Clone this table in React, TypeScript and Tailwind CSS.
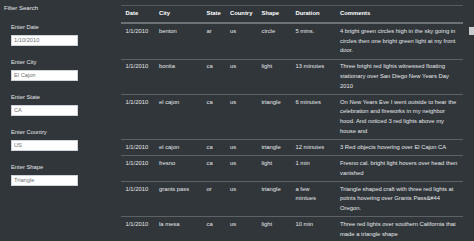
import type { ReactNode } from "react";

const filters = [
  { label: "Enter Date", value: "1/10/2010" },
  { label: "Enter City", value: "El Cajon" },
  { label: "Enter State", value: "CA" },
  { label: "Enter Country", value: "US" },
  { label: "Enter Shape", value: "Triangle" },
];

const rows: ReactNode[][] = [
  ["1/1/2010", "benton", "ar", "us", "circle", "5 mins.", "4 bright green circles high in the sky going in circles then one bright green light at my front door."],
  ["1/1/2010", "bonita", "ca", "us", "light", "13 minutes", "Three bright red lights witnessed floating stationary over San Diego New Years Day 2010"],
  ["1/1/2010", "el cajon", "ca", "us", "triangle", "6 minutes", "On New Years Eve I went outside to hear the celebration and fireworks in my neighbor hood. And noticed 3 red lights above my house and"],
  ["1/1/2010", "el cajon", "ca", "us", "triangle", "12 minutes", "3 Red objects hovering over El Cajon CA"],
  [
    "1/1/2010",
    "fresno",
    "ca",
    "us",
    "light",
    "1 min",
    <>
      <span className="whitespace-nowrap">Fresno cal. bright light hovers over head then</span> vanished
    </>,
  ],
  ["1/1/2010", "grants pass", "or", "us", "triangle", "a few mintues", "Triangle shaped craft with three red lights at points hovering over Grants Pass&#44 Oregon."],
  ["1/1/2010", "la mesa", "ca", "us", "light", "10 min", "Three red lights over southern California that made a triangle shape"],
];

const headers = ["Date", "City", "State", "Country", "Shape", "Duration", "Comments"];
const widths = ["w-[33.5px]", "w-[47.5px]", "w-[23.5px]", "w-[31.5px]", "w-[34px]", "w-[44.5px]", "w-[127.5px]"];
const pads = ["pr-[4px]", "pr-[4px]", "pr-[4px]", "pr-[4px]", "pr-[4px]", "pr-[7px]", "pr-[2px]"];

export default function App() {
  return (
    <div className="relative flex h-[241px] w-[474px] overflow-hidden bg-[#31363b] font-['Liberation_Sans',Arial,sans-serif] text-[5.85px] leading-[9.75px] text-[#e6e8ea]">
      <aside className="w-[121px] shrink-0 pt-[3.5px]">
        <div className="pl-[4px] text-[6px] leading-[9px]">Filter Search</div>
        <div className="mt-[10px] flex flex-col gap-[12px] pl-[11px]">
          {filters.map((f) => (
            <div key={f.label} className="flex flex-col">
              <label className="text-[5.8px] leading-[9px]">{f.label}</label>
              <input
                readOnly
                value={f.value}
                className="mt-[3.5px] h-[10.5px] w-[66.5px] border border-[#ced4da] bg-white px-[2px] text-[5.7px] leading-[9px] text-[#6c6f73] outline-none"
              />
            </div>
          ))}
        </div>
      </aside>
      <main className="mt-[4.5px] w-[342px] shrink-0">
        <table className="w-full table-fixed border-collapse">
          <colgroup>
            {widths.map((w, i) => (
              <col key={i} className={w} />
            ))}
          </colgroup>
          <thead>
            <tr className="border-t border-b-2 border-t-[#565b61] border-b-[#6d7278]">
              {headers.map((h) => (
                <th key={h} className="px-[4.5px] py-[3.5px] text-left align-top font-bold text-white">
                  {h}
                </th>
              ))}
            </tr>
          </thead>
          <tbody>
            {rows.map((r, i) => (
              <tr key={i} className="border-b border-[#5d6267]">
                {r.map((c, j) => (
                  <td key={j} className={`py-[2.6px] pl-[4.5px] align-top ${pads[j]}`}>
                    {c}
                  </td>
                ))}
              </tr>
            ))}
          </tbody>
        </table>
      </main>
      <div className="absolute right-0 top-[27px] h-[8px] w-[5px] bg-[#c9cbcd]" />
    </div>
  );
}
